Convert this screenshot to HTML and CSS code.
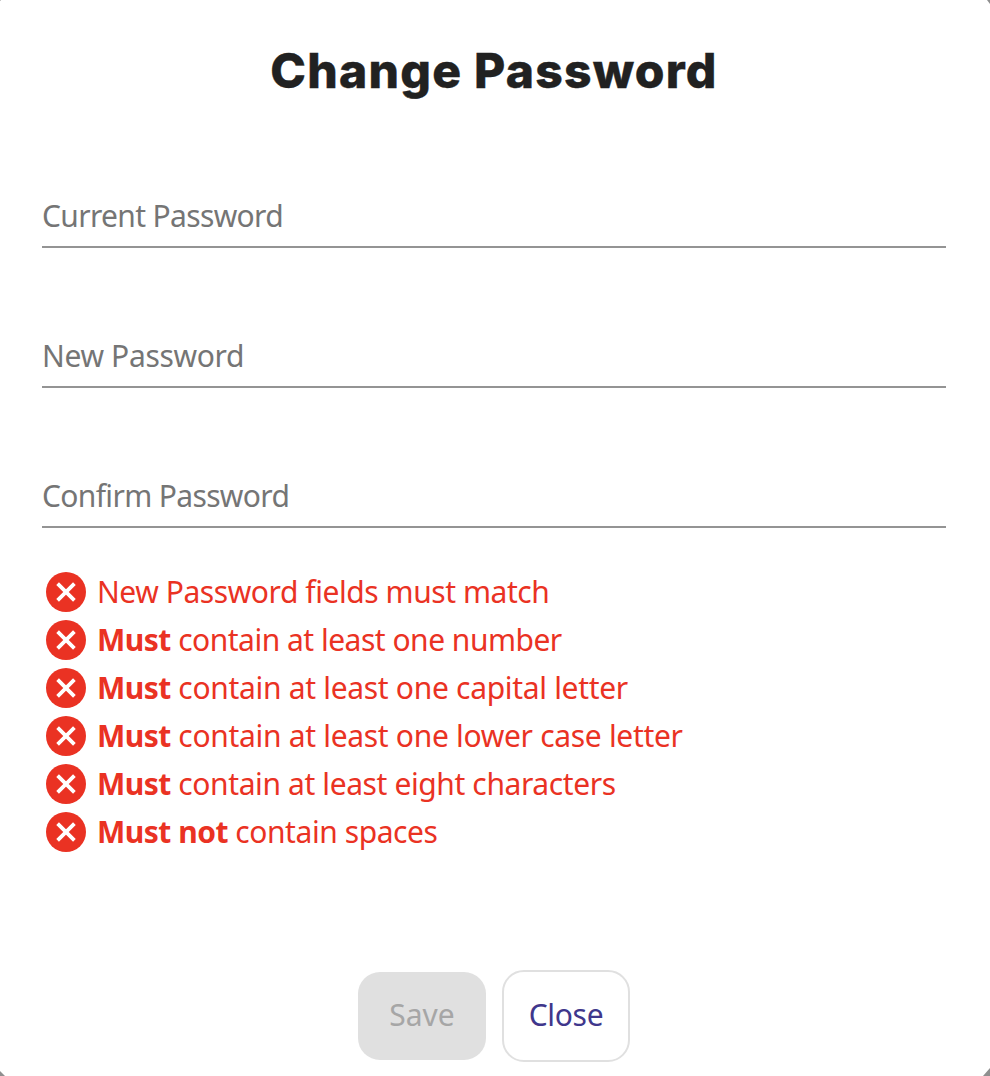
FILE: index.html
```html
<!DOCTYPE html>
<html lang="en">
<head>
<meta charset="utf-8">
<title>Change Password</title>
<link rel="stylesheet" href="styles.css">
</head>
<body>
<svg width="0" height="0" class="defs" aria-hidden="true">
  <symbol id="error" viewBox="0 0 40 40">
    <circle cx="20" cy="20" r="20" fill="#ea3223"/>
    <path d="M11.6 11.6 28.4 28.4M28.4 11.6 11.6 28.4" stroke="#fff" stroke-width="3.8" fill="none"/>
  </symbol>
</svg>
<main class="dialog">
  <h1 class="title">Change Password</h1>
  <form class="form">
    <label class="field"><span class="current">Current Password</span></label>
    <label class="field"><span class="new">New Password</span></label>
    <label class="field"><span class="confirm">Confirm Password</span></label>
    <ul class="rules">
      <li><svg class="icon"><use href="#error"/></svg><span class="r1">New Password fields must match</span></li>
      <li><svg class="icon"><use href="#error"/></svg><span class="r2"><b>Must</b> contain at least one number</span></li>
      <li><svg class="icon"><use href="#error"/></svg><span class="r3"><b>Must</b> contain at least one capital letter</span></li>
      <li><svg class="icon"><use href="#error"/></svg><span class="r4"><b>Must</b> contain at least one lower case letter</span></li>
      <li><svg class="icon"><use href="#error"/></svg><span class="r5"><b>Must</b> contain at least eight characters</span></li>
      <li><svg class="icon"><use href="#error"/></svg><span class="r6"><b>Must not</b> contain spaces</span></li>
    </ul>
    <div class="actions">
      <button type="button" class="btn save" disabled>Save</button>
      <button type="button" class="btn close">Close</button>
    </div>
  </form>
</main>
</body>
</html>
```
FILE: styles.css
```css
* { box-sizing: border-box; }
body {
  margin: 0;
  background: #8f8f8f;
  font-family: "Noto Sans", "Open Sans", sans-serif;
  font-size: 30px;
}
.defs { display: none; }
.dialog {
  height: 1076px;
  padding: 36px 44px 14px 42px;
  background: #fff;
  clip-path: polygon(1px 0, 987px 0, 990px 4px, 990px 1068px, 983px 1076px, 5px 1076px, 0 1071px, 0 1px);
}
.title {
  margin: 0;
  height: 72px;
  line-height: 70px;
  text-align: center;
  font-family: Inter, sans-serif;
  font-size: 48px;
  font-weight: 800;
  letter-spacing: 1.25px;
  -webkit-text-stroke: .4px #212121;
  color: #212121;
}
.form { display: flex; flex-direction: column; }
.field {
  display: flex;
  align-items: flex-end;
  height: 140px;
  padding-bottom: 9px;
  line-height: 42px;
  color: #757575;
  border-bottom: 2px solid #949494;
}
.field span { white-space: nowrap; }
.current, .confirm { letter-spacing: -.65px; }
.new { letter-spacing: -.35px; }
.rules {
  margin: 40px 0 0;
  padding: 0 0 0 4px;
  list-style: none;
  color: #ea3223;
}
.rules li {
  display: flex;
  align-items: center;
  gap: 11px;
  height: 48px;
  line-height: 46px;
  white-space: nowrap;
}
.rules b { letter-spacing: -.5px; }
.r1 { letter-spacing: -.44px; }
.r2 { letter-spacing: -.5px; }
.r3 { letter-spacing: -.31px; }
.r4 { letter-spacing: -.31px; }
.r5 { letter-spacing: -.39px; }
.r6 { letter-spacing: -.43px; }
.icon { width: 40px; height: 40px; flex: none; }
.actions {
  display: flex;
  justify-content: center;
  align-items: center;
  gap: 16px;
  margin-top: 114px;
}
.btn {
  width: 128px;
  height: 88px;
  padding: 0 0 3px;
  border: 0;
  border-radius: 22px;
  font: inherit;
}
.save { background: #e0e0e0; color: #a6a6a6; }
.close { height: 92px; background: #fff; border: 2px solid #e0e0e0; color: #3f378c; letter-spacing: -.3px; }
```
